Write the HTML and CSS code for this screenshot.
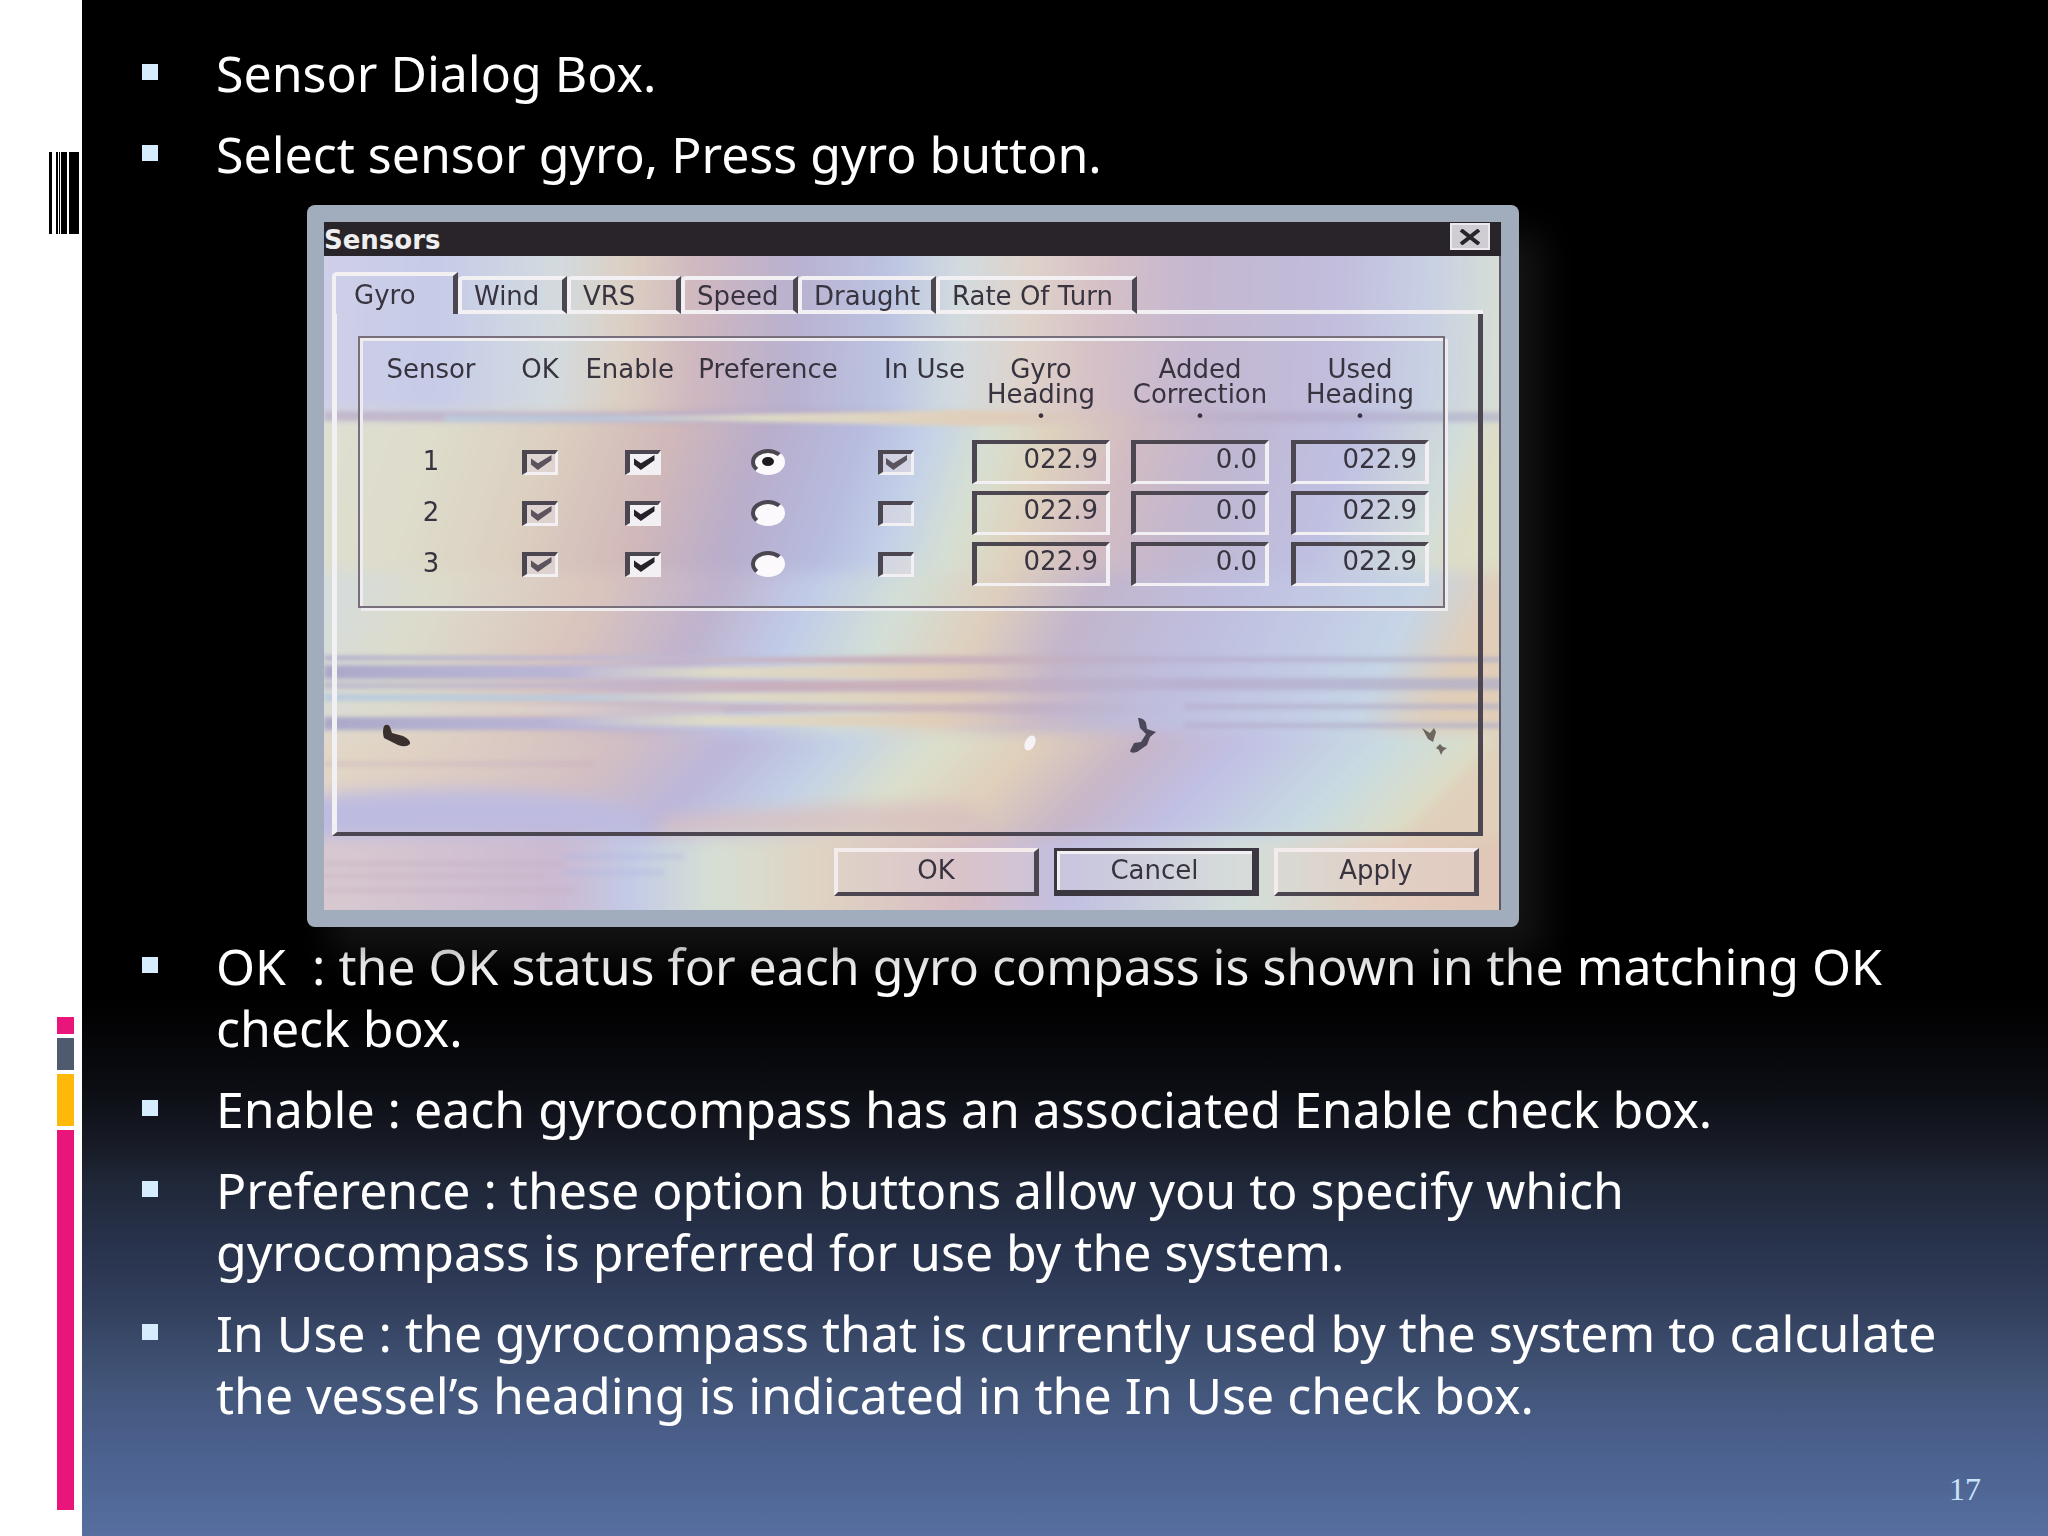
FILE: index.html
```html
<!DOCTYPE html>
<html lang="en">
<head>
<meta charset="utf-8">
<title>Sensor Dialog Box</title>
<link rel="stylesheet" href="styles.css">
</head>
<body>
<div class="slide">
  <aside class="rail">
    <svg class="barcode" viewBox="0 0 30 82" aria-hidden="true">
      <path d="M0 0h3v82H0zM7 0h2v82H7zM10 0h1v82h-1zM12 0h6v82h-6zM20 0h10v82H20z"/>
    </svg>
    <div class="stripes">
      <span class="stripe stripe-pink-small"></span>
      <span class="stripe stripe-slate"></span>
      <span class="stripe stripe-amber"></span>
      <span class="stripe stripe-pink"></span>
    </div>
  </aside>

  <main class="content">
    <ul class="bullets">
      <li>Sensor Dialog Box.</li>
      <li>Select sensor gyro, Press gyro button.</li>
    </ul>

    <section class="frame" aria-label="Sensors">
      <div class="dialog">
        <svg class="sheen" viewBox="0 0 1177 688" preserveAspectRatio="none" aria-hidden="true">
          <defs>
            <linearGradient id="ga" gradientUnits="userSpaceOnUse" x1="0" y1="0" x2="1177" y2="60">
              <stop offset="0" stop-color="#cfcfe8"/><stop offset=".1" stop-color="#c6cbe8"/><stop offset=".2" stop-color="#d3dbdf"/><stop offset=".26" stop-color="#dccfc2"/><stop offset=".32" stop-color="#cfb7bf"/><stop offset=".4" stop-color="#b9b1cf"/><stop offset=".48" stop-color="#bbc3e2"/><stop offset=".54" stop-color="#d2dbe0"/><stop offset=".6" stop-color="#dfd2ca"/><stop offset=".66" stop-color="#d6c0c6"/><stop offset=".74" stop-color="#c4b7d0"/><stop offset=".86" stop-color="#c1bddc"/><stop offset=".94" stop-color="#c8d0e4"/><stop offset="1" stop-color="#d6ded6"/>
            </linearGradient>
            <linearGradient id="gb" gradientUnits="userSpaceOnUse" x1="0" y1="190" x2="1060" y2="543">
              <stop offset="0" stop-color="#dfe0d2"/><stop offset=".1" stop-color="#dedccb"/><stop offset=".2" stop-color="#dccfc0"/><stop offset=".3" stop-color="#d1b8b9"/><stop offset=".38" stop-color="#b9adcb"/><stop offset=".46" stop-color="#b6bbdf"/><stop offset=".52" stop-color="#c4d2e8"/><stop offset=".57" stop-color="#d6e0d2"/><stop offset=".62" stop-color="#dfd3be"/><stop offset=".69" stop-color="#d2bcc2"/><stop offset=".77" stop-color="#c1b6d0"/><stop offset=".88" stop-color="#bfc0e2"/><stop offset=".97" stop-color="#d1dddb"/><stop offset="1" stop-color="#deddc6"/>
            </linearGradient>
            <linearGradient id="gc" gradientUnits="userSpaceOnUse" x1="0" y1="350" x2="942" y2="821">
              <stop offset="0" stop-color="#d3dcdf"/><stop offset=".1" stop-color="#dddccb"/><stop offset=".24" stop-color="#dac4bd"/><stop offset=".34" stop-color="#bfb2cd"/><stop offset=".42" stop-color="#c0cbe8"/><stop offset=".5" stop-color="#d3dfd7"/><stop offset=".58" stop-color="#dfcfbd"/><stop offset=".66" stop-color="#c2b5cc"/><stop offset=".78" stop-color="#bfbfe0"/><stop offset=".94" stop-color="#c6d5e6"/><stop offset="1" stop-color="#e0ceb9"/>
            </linearGradient>
            <linearGradient id="gd" gradientUnits="userSpaceOnUse" x1="0" y1="500" x2="600" y2="1100">
              <stop offset="0" stop-color="#e2d9c8"/><stop offset=".1" stop-color="#e0d1c4"/><stop offset=".26" stop-color="#d3bfc2"/><stop offset=".36" stop-color="#bcb6da"/><stop offset=".45" stop-color="#c3d2e6"/><stop offset=".53" stop-color="#dbe0cc"/><stop offset=".61" stop-color="#e0cfba"/><stop offset=".7" stop-color="#c7b5c8"/><stop offset=".78" stop-color="#c0bfe4"/><stop offset=".9" stop-color="#c8dbe2"/><stop offset=".98" stop-color="#dbdec8"/><stop offset="1" stop-color="#e0d0ba"/>
            </linearGradient>
            <linearGradient id="ge" gradientUnits="userSpaceOnUse" x1="0" y1="0" x2="1177" y2="0">
              <stop offset="0" stop-color="#d8c9cf"/><stop offset=".2" stop-color="#cbbad2"/><stop offset=".26" stop-color="#c3cae6"/><stop offset=".33" stop-color="#d6dfd4"/><stop offset=".42" stop-color="#e0d3c2"/><stop offset=".54" stop-color="#d8bdc4"/><stop offset=".63" stop-color="#c2bfe2"/><stop offset=".78" stop-color="#d3dfda"/><stop offset=".9" stop-color="#e3cdbf"/><stop offset="1" stop-color="#e0c6b6"/>
            </linearGradient>
            <linearGradient id="fadeLeft" x1="0" x2="1" y1="0" y2="0">
              <stop offset="0" stop-color="#aba7c8"/><stop offset=".6" stop-color="#b3b2dc" stop-opacity=".8"/><stop offset="1" stop-color="#c5d8ea" stop-opacity="0"/>
            </linearGradient>
            <linearGradient id="fadeSky" x1="0" x2="1" y1="0" y2="0">
              <stop offset="0" stop-color="#b9cbdd"/><stop offset=".7" stop-color="#b6cbe2" stop-opacity=".8"/><stop offset="1" stop-color="#c5d8ea" stop-opacity="0"/>
            </linearGradient>
            <linearGradient id="fadeCream" x1="0" x2="1" y1="0" y2="0">
              <stop offset="0" stop-color="#dddccf" stop-opacity="0"/><stop offset=".3" stop-color="#dedac6"/><stop offset=".7" stop-color="#e0cdb9"/><stop offset="1" stop-color="#cdb8c4" stop-opacity="0"/>
            </linearGradient>
            <linearGradient id="fadeRose" x1="0" x2="1" y1="0" y2="0">
              <stop offset="0" stop-color="#d2b6b8" stop-opacity="0"/><stop offset=".3" stop-color="#c8afbd"/><stop offset=".7" stop-color="#c9b0ba"/><stop offset="1" stop-color="#b8acc9" stop-opacity="0"/>
            </linearGradient>
            <linearGradient id="fadeRight" x1="0" x2="1" y1="0" y2="0">
              <stop offset="0" stop-color="#b5a3bd" stop-opacity="0"/><stop offset=".4" stop-color="#b3a5c2" stop-opacity=".8"/><stop offset="1" stop-color="#a9abca"/>
            </linearGradient>
            <filter id="soft" x="-5%" y="-50%" width="110%" height="200%"><feGaussianBlur stdDeviation="2"/></filter>
            <filter id="softer" x="-5%" y="-20%" width="110%" height="140%"><feGaussianBlur stdDeviation="8"/></filter>
          </defs>
          <rect width="1177" height="688" fill="#cfcbdc"/>
          <g filter="url(#softer)">
            <path d="M-20 -20H1200V192H-20z" fill="url(#ga)"/>
            <path d="M-20 192H1200V350H-20z" fill="url(#gb)"/>
            <path d="M-20 350H1200V510H-20z" fill="url(#gc)"/>
            <path d="M-20 510H1200V616H-20z" fill="url(#gd)"/>
            <path d="M-20 616H1200V710H-20z" fill="url(#ge)"/>
            <path d="M-20 574Q120 562 230 572T320 612L-20 616z" fill="#bdbbe0"/>
            <path d="M340 596Q480 580 640 580L680 612H330z" fill="#d8bfc0" opacity=".8"/>
          </g>
          <g filter="url(#soft)">
            <path d="M0 189L300 190 460 186 640 190 460 202 0 199z" fill="#b8abc9" opacity=".7"/>
            <path d="M120 194H440V199H120z" fill="url(#fadeSky)"/>
            <path d="M250 196L640 188 860 194 860 200 640 204z" fill="url(#fadeCream)"/>
            <path d="M800 190H1177V200H800z" fill="url(#fadeRight)" opacity=".6"/>
            <path d="M0 434H420V438H0z" fill="url(#fadeLeft)"/>
            <path d="M0 443H420V457H0z" fill="url(#fadeLeft)"/>
            <path d="M0 460H500V467H0z" fill="url(#fadeLeft)" opacity=".6"/>
            <path d="M0 472H400V479H0z" fill="url(#fadeSky)"/>
            <path d="M0 483H400V492H0z" fill="#dcd9d8" opacity=".5"/>
            <path d="M0 495H460V508H0z" fill="url(#fadeLeft)"/>
            <path d="M260 438L560 434 860 434 860 441 560 442z" fill="url(#fadeRose)"/>
            <path d="M240 446L760 442V456H240z" fill="url(#fadeCream)"/>
            <path d="M240 460L820 456V470H240z" fill="url(#fadeRose)"/>
            <path d="M240 471H800V480H240z" fill="url(#fadeCream)"/>
            <path d="M240 482H840V490H240z" fill="url(#fadeRose)" opacity=".8"/>
            <path d="M220 493H780V504H220z" fill="url(#fadeCream)"/>
            <path d="M740 435H1177V440H740zM700 456H1177V468H700zM860 482H1177V487H860zM860 501H1177V506H860z" fill="url(#fadeRight)" opacity=".7"/>
            <path d="M0 540H270V544H0zM0 640H240V644H0zM0 652H220V656H0zM0 666H250V670H0z" fill="#c2a9bd" opacity=".4"/>
            <path d="M240 632H360V637H240zM240 648H340V653H240z" fill="#aeb6de" opacity=".4"/>
          </g>
          <path d="M1176 30V688" stroke="#5d5865" stroke-width="2"/>
        </svg>

        <header class="titlebar">
          <h1>Sensors</h1>
          <button class="close" type="button" aria-label="Close">
            <svg viewBox="0 0 24 16" aria-hidden="true"><path d="M3 1L21 15M21 1L3 15"/></svg>
          </button>
        </header>

        <div class="tabs" role="tablist">
          <button class="tab tab-active" type="button" role="tab" aria-selected="true">Gyro</button>
          <button class="tab" type="button" role="tab">Wind</button>
          <button class="tab" type="button" role="tab">VRS</button>
          <button class="tab" type="button" role="tab">Speed</button>
          <button class="tab" type="button" role="tab">Draught</button>
          <button class="tab" type="button" role="tab">Rate Of Turn</button>
          <span class="tab-rest"></span>
        </div>

        <div class="panel" role="tabpanel">
          <div class="group">
            <table class="sensors">
              <colgroup><col class="c-sensor"><col class="c-ok"><col class="c-enable"><col class="c-pref"><col class="c-use"><col class="c-gyro"><col class="c-added"><col class="c-used"></colgroup>
              <thead>
                <tr>
                  <th scope="col">Sensor</th><th scope="col">OK</th><th scope="col" class="enable">Enable</th><th scope="col">Preference</th><th scope="col" class="use">In Use</th>
                  <th scope="col">Gyro<br>Heading<span class="unit">•</span></th><th scope="col">Added<br>Correction<span class="unit">•</span></th><th scope="col">Used<br>Heading<span class="unit">•</span></th>
                </tr>
              </thead>
              <tbody>
                <tr>
                  <td>1</td>
                  <td><input class="box box-grey" type="checkbox" checked aria-label="Sensor 1 OK"></td>
                  <td class="enable"><input class="box" type="checkbox" checked aria-label="Sensor 1 enable"></td>
                  <td><input class="radio" type="radio" name="pref" checked aria-label="Prefer sensor 1"></td>
                  <td class="use"><input class="box box-grey" type="checkbox" checked aria-label="Sensor 1 in use"></td>
                  <td><input class="field" value="022.9" readonly aria-label="Gyro heading 1"></td>
                  <td><input class="field" value="0.0" readonly aria-label="Added correction 1"></td>
                  <td><input class="field" value="022.9" readonly aria-label="Used heading 1"></td>
                </tr>
                <tr>
                  <td>2</td>
                  <td><input class="box box-grey" type="checkbox" checked aria-label="Sensor 2 OK"></td>
                  <td class="enable"><input class="box" type="checkbox" checked aria-label="Sensor 2 enable"></td>
                  <td><input class="radio" type="radio" name="pref" aria-label="Prefer sensor 2"></td>
                  <td class="use"><input class="box box-grey" type="checkbox" aria-label="Sensor 2 in use"></td>
                  <td><input class="field" value="022.9" readonly aria-label="Gyro heading 2"></td>
                  <td><input class="field" value="0.0" readonly aria-label="Added correction 2"></td>
                  <td><input class="field" value="022.9" readonly aria-label="Used heading 2"></td>
                </tr>
                <tr>
                  <td>3</td>
                  <td><input class="box box-grey" type="checkbox" checked aria-label="Sensor 3 OK"></td>
                  <td class="enable"><input class="box" type="checkbox" checked aria-label="Sensor 3 enable"></td>
                  <td><input class="radio" type="radio" name="pref" aria-label="Prefer sensor 3"></td>
                  <td class="use"><input class="box box-grey" type="checkbox" aria-label="Sensor 3 in use"></td>
                  <td><input class="field" value="022.9" readonly aria-label="Gyro heading 3"></td>
                  <td><input class="field" value="0.0" readonly aria-label="Added correction 3"></td>
                  <td><input class="field" value="022.9" readonly aria-label="Used heading 3"></td>
                </tr>
              </tbody>
            </table>
          </div>
          <svg class="specks" viewBox="0 0 1100 48" aria-hidden="true">
            <path d="M26 12q4-3 6 1l2 6 11 3q8 4 7 8-4 4-12 1l-14-7q-2-6 0-12z" fill="#3a302e"/>
            <ellipse cx="672" cy="29" rx="5" ry="8" transform="rotate(25 672 29)" fill="#f6f2f6"/>
            <path d="M780 4q6 0 8 5l1 6 9 3-6 5-3 8-10 7q-6 2-7-1l4-8 7-1 5-8-6-6z" fill="#4b4658"/>
            <path d="M1064 14l8 5 4-5 2 4-3 10-5-3zM1082 30l3 3 4 1-4 3-2 4-2-5-3-2z" fill="#6f675f"/>
          </svg>
        </div>

        <footer class="actions">
          <button class="action" type="button">OK</button>
          <button class="action action-default" type="button">Cancel</button>
          <button class="action" type="button">Apply</button>
        </footer>
      </div>
    </section>

    <ul class="bullets">
      <li>OK&nbsp; : the OK status for each gyro compass is shown in the matching OK check box.</li>
      <li>Enable : each gyrocompass has an associated Enable check box.</li>
      <li>Preference : these option buttons allow you to specify which gyrocompass is preferred for use by the system.</li>
      <li>In Use : the gyrocompass that is currently used by the system to calculate the vessel’s heading is indicated in the In Use check box.</li>
    </ul>

    <div class="page-number">17</div>
  </main>
</div>
</body>
</html>
```
FILE: styles.css
```css
* {
  box-sizing: border-box;
}

body {
  margin: 0;
  background: #fff;
}

.slide {
  display: grid;
  grid-template-columns: 82px 1fr;
  min-height: 100vh;
}

/* Left rail */
.rail {
  display: flex;
  flex-direction: column;
  justify-content: space-between;
  padding: 152px 3px 26px 49px;
  background: #fff;
}

.barcode {
  width: 30px;
  height: 82px;
}

.stripes {
  display: flex;
  flex-direction: column;
  gap: 4px;
  margin-left: 8px;
}

.stripe {
  width: 17px;
  background: #ea157a;
}

.stripe-pink-small { height: 17px; }
.stripe-slate { height: 32px; background: #4e5b6f; }
.stripe-amber { height: 52px; background: #feb80a; }
.stripe-pink { height: 380px; }

/* Slide body */
.content {
  display: flex;
  flex-direction: column;
  padding: 42px 67px 0 60px;
  background: linear-gradient(#000 0%, #000 65%, #040406 67%, #0c0e14 71%, #191d29 75%, #1f2738 77%, #2a3550 82%, #323f5c 85%, #425578 90%, #4a5f8c 94%, #566fa0 100%);
}

.bullets {
  display: flex;
  flex-direction: column;
  gap: 19px;
  margin: 0;
  padding: 0 38px 0 0;
  list-style: none;
  color: #fff;
  font: 50px/62px "Noto Sans", "Open Sans", sans-serif;
}

.bullets li {
  display: grid;
  grid-template-columns: 74px 1fr;
}

.bullets li::before {
  content: "";
  width: 16px;
  height: 16px;
  margin-top: 22px;
  background: #d6ecff;
}

.page-number {
  margin-top: auto;
  padding-bottom: 29px;
  color: #c8e4f8;
  font: 32px/36px "Liberation Serif", serif;
  text-align: right;
}

/* Framed dialog */
.frame {
  position: relative;
  z-index: 1;
  width: 1212px;
  margin: 20px 0 8px 165px;
  padding: 17px 18px 17px 17px;
  border-radius: 8px;
  background: #a1adbc;
  box-shadow: 24px 28px 36px rgba(45, 45, 45, .45);
}

.dialog {
  position: relative;
  overflow: hidden;
  color: #38343f;
  font: 26px/25px "DejaVu Sans", sans-serif;
}

.dialog > * {
  position: relative;
}

.dialog > .sheen {
  position: absolute;
  inset: 0;
  width: 100%;
  height: 100%;
}

.dialog button,
.dialog input {
  margin: 0;
  color: inherit;
  font: inherit;
}

.titlebar {
  display: flex;
  align-items: start;
  justify-content: space-between;
  height: 34px;
  padding: 1px 11px 0 0;
  background: #29242a;
}

.titlebar h1 {
  margin: 0;
  color: #eee;
  font: bold 26px/34px "DejaVu Sans", sans-serif;
}

.close {
  display: grid;
  place-items: center;
  width: 40px;
  height: 27px;
  padding: 0;
  border: 2px solid #eceaf0;
  background: #cfccd4;
}

.close svg {
  width: 24px;
  height: 16px;
  fill: none;
  stroke: #29242a;
  stroke-width: 4;
}

.tabs {
  display: grid;
  grid-template-columns: 126px 109px 114px 117px 138px 201px 1fr;
  align-items: end;
  height: 58px;
  padding: 16px 18px 0 8px;
}

.tab {
  height: 38px;
  padding: 2px 0 0 12px;
  border: solid #f3f0f4;
  border-width: 4px 5px 4px 4px;
  border-right-color: #4c4650;
  border-radius: 5px 0 0 0;
  background: none;
  text-align: left;
}

.tab-active {
  height: 42px;
  padding: 0 0 0 18px;
  border-bottom: 0;
}

.tab-rest {
  height: 4px;
  background: #f3f0f4;
}

.panel {
  min-height: 522px;
  margin: 0 18px 0 8px;
  padding: 22px 33px 0 21px;
  border: solid #4c4650;
  border-width: 0 5px 4px;
  border-left-color: #f3f0f4;
}

.group {
  min-height: 272px;
  padding-top: 17px;
  border: 2px solid #77707c;
  box-shadow: 3px 3px 0 #efecf0, inset 3px 3px 0 #efecf0;
}

.sensors {
  table-layout: fixed;
  width: 1077px;
  border-collapse: collapse;
}

.c-sensor { width: 142px; }
.c-ok { width: 76px; }
.c-enable { width: 110px; }
.c-pref { width: 160px; }
.c-use { width: 117px; }
.c-gyro { width: 152px; }
.c-added { width: 166px; }
.c-used { width: 154px; }

.sensors th,
.sensors td {
  padding: 0;
  font-weight: normal;
  text-align: center;
  white-space: nowrap;
}

.sensors th {
  height: 81px;
  padding-top: 2px;
  vertical-align: top;
}

.sensors td {
  height: 51px;
  vertical-align: middle;
}

.sensors .enable { text-align: right; }
.sensors th.enable { padding-right: 14px; }
.sensors td.enable { padding-right: 27px; }
.sensors th.use { text-align: right; }
.sensors td.use { padding-right: 22px; }

.unit {
  display: block;
  font-size: 16px;
  line-height: 20px;
}

.box,
.radio {
  display: inline-grid;
  place-items: center;
  width: 36px;
  height: 25px;
  appearance: none;
  vertical-align: middle;
}

.box {
  border: solid #f3f0f4;
  border-width: 4px 3px 3px 5px;
  border-top-color: #4c4650;
  border-left-color: #4c4650;
  background: #f3f0f4;
}

.box-grey {
  background: rgba(225, 218, 224, .5);
}

.box:checked::before {
  content: "";
  width: 21px;
  height: 15px;
  background: #26222a;
  clip-path: polygon(0 20%, 35% 55%, 100% 0, 100% 35%, 35% 100%, 0 62%);
}

.box-grey:checked::before {
  background: #5b545e;
}

.radio {
  width: 34px;
  height: 26px;
  border: solid #fbf9fb;
  border-width: 4px;
  border-top-color: #4c4650;
  border-left-color: #4c4650;
  border-radius: 50%;
  background: #fbf9fb;
}

.radio:checked::before {
  content: "";
  width: 12px;
  height: 9px;
  border-radius: 50%;
  background: #1d1a20;
}

.field {
  display: block;
  width: 138px;
  height: 44px;
  padding: 0 8px 6px 0;
  border: solid #f3f0f4;
  border-width: 4px 4px 3px 5px;
  border-top-color: #4c4650;
  border-left-color: #4c4650;
  border-radius: 0;
  background: none;
  text-align: right;
}

.sensors td > .field {
  margin: 0 auto;
}

.specks {
  display: block;
  width: 1100px;
  height: 48px;
  margin-top: 106px;
}

.actions {
  display: flex;
  justify-content: flex-end;
  gap: 15px;
  padding: 12px 22px 14px 0;
}

.action {
  width: 205px;
  height: 48px;
  padding: 0 0 4px;
  border: solid #f3ebec;
  border-width: 4px 5px 4px 4px;
  border-right-color: #4c4650;
  border-bottom-color: #4c4650;
  border-radius: 0;
  background: rgba(225, 215, 215, .25);
}

.action-default {
  padding: 0;
  border-width: 3px 7px 6px 3px;
  border-color: #3b3640;
  box-shadow: inset 3px 3px 0 #f3f0f4;
}
```
